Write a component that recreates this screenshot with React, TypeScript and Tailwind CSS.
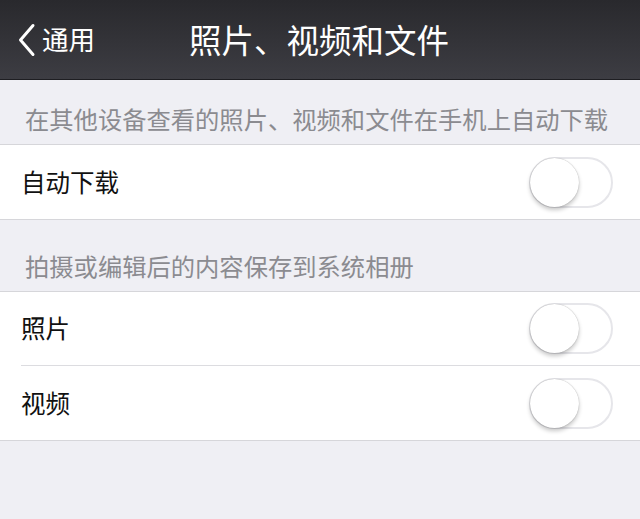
import React from "react";

function Toggle() {
  return (
    <div className="relative h-[51px] w-[84px] rounded-full border-2 border-[#e6e6ea] bg-white">
      <div className="absolute left-[-1px] top-[-1px] h-[49px] w-[49px] rounded-full bg-white shadow-[0_3px_4px_rgba(0,0,0,0.22),0_0_1px_rgba(0,0,0,0.35)]" />
    </div>
  );
}

function Row({ label, last }: { label: string; last?: boolean }) {
  return (
    <div className="flex h-[74px] items-center pl-[21px]">
      <div className={`flex h-full flex-1 items-center justify-between pr-[27px] ${last ? "" : "border-b border-[#dcdce0]"}`}>
        <span className="text-[24.5px] text-[#111]">{label}</span>
        <Toggle />
      </div>
    </div>
  );
}

export default function App() {
  return (
    <div
      className="flex h-[519px] w-[640px] flex-col overflow-hidden bg-[#efeff4]"
      style={{ fontFamily: '"Noto Sans CJK SC", "Noto Sans", sans-serif' }}
    >
      <div className="relative flex h-[80px] items-center border-b border-[#1e1e22] bg-gradient-to-b from-[#29292d] to-[#3d3d43]">
        <div className="flex items-center pl-[17px] text-white">
          <svg width="20" height="34" viewBox="0 0 20 34" className="mr-[5px] mt-[1px]">
            <path d="M16 2.5 L3.5 17 L16 31.5" fill="none" stroke="white" strokeWidth="3" strokeLinecap="round" strokeLinejoin="round" />
          </svg>
          <span className="text-[26.5px] leading-none">通用</span>
        </div>
        <div className="absolute left-[189px] top-0 flex h-full items-center text-[32.5px] text-white">
          照片、视频和文件
        </div>
      </div>
      <div className="flex h-[65px] items-end border-b border-[#d6d6da] pb-[7px] pl-[25px] text-[24.3px] text-[#8b8b90]">
        在其他设备查看的照片、视频和文件在手机上自动下载
      </div>
      <div className="border-b border-[#d6d6da] bg-white">
        <Row label="自动下载" last />
      </div>
      <div className="flex h-[72px] items-end border-b border-[#d6d6da] pb-[7px] pl-[25px] text-[24.3px] text-[#8b8b90]">
        拍摄或编辑后的内容保存到系统相册
      </div>
      <div className="border-b border-[#d6d6da] bg-white">
        <Row label="照片" />
        <Row label="视频" last />
      </div>
    </div>
  );
}
